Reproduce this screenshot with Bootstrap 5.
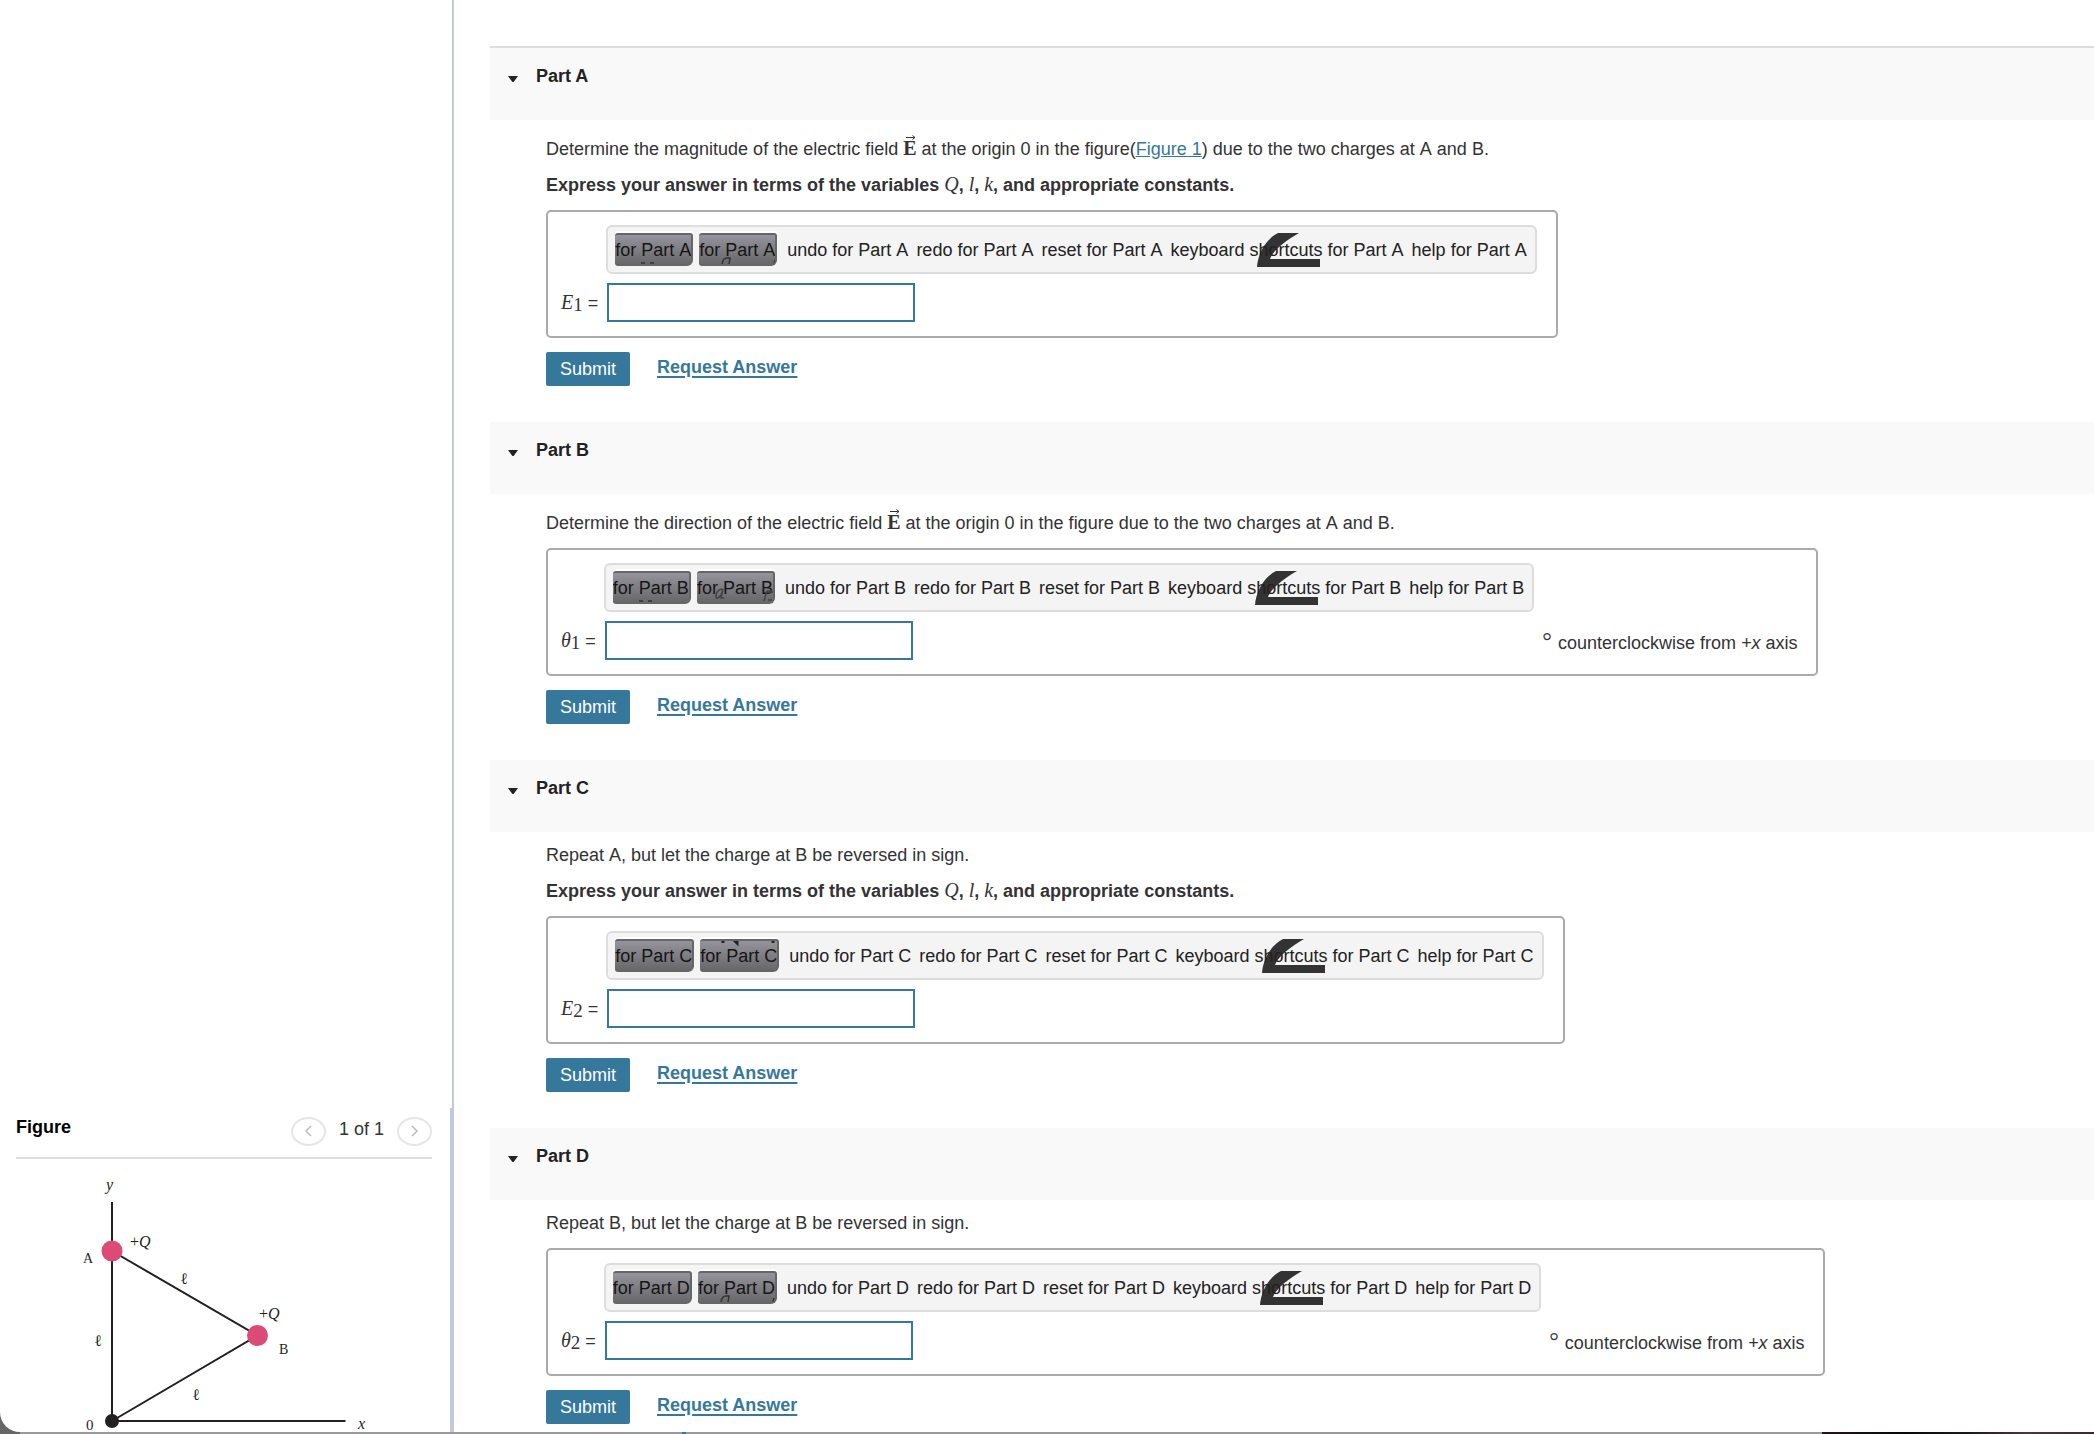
<!DOCTYPE html>
<html lang="en">
<head>
<meta charset="utf-8">
<meta name="viewport" content="width=device-width, initial-scale=1">
<title>Electric field of two charges</title>
<link href="https://cdn.jsdelivr.net/npm/bootstrap@5.3.0/dist/css/bootstrap.min.css" rel="stylesheet">
<style>
  body { font-family: "Liberation Sans", Arial, sans-serif; font-size: 18px; line-height: 24px; color: #333; background: #fff; }
  .teal, .teal:hover { color: #35789b; }
  .app-shell { background: linear-gradient(90deg, #666 0, #666 20px, #999 20px); }
  .app-main { background: #fff; border-bottom-left-radius: 20px; }
  .side-pane { width: 454px; }
  .side-top { border-right: 2px solid #bfcbdd; }
  .figure-pane { height: 324px; border-right: 4px solid #bfcbdd; }
  .figure-head { margin: 0 18px 0 16px; height: 51px; border-bottom: 2px solid #ddd; color: #000; }
  .figure-title { padding-top: 7px; }
  .pager { gap: 13px; padding-top: 9px; color: #333; }
  .pager-btn { width: 35px; height: 29px; border: 2px solid #e6e6e6; border-radius: 50%; background: #fff; }
  .pager-btn svg { vertical-align: middle; margin-bottom: 3px; }
  .content-pane { padding: 46px 0 0 36px; }
  .first-part { border-top: 2px solid #ddd; }
  .part-head { height: 72px; background: #f9f9f9; padding: 16px 0 0 17px; }
  .part-toggle { font-size: 18px; font-weight: bold; line-height: 24px; color: #222; }
  .part-toggle svg { margin: 11px 17px 0 0; }
  .part-body { padding: 11px 0 36px 56px; }
  .part-body p { margin-bottom: 12px; font-kerning: none; }
  .part-body p.has-vector { margin-top: 6px; }
  .math { font-family: "Liberation Serif", serif; font-style: italic; font-weight: normal; font-size: 20px; line-height: 1; }
  .math span { font-style: normal; font-size: 19px; position: relative; top: 2px; }
  .vector { position: relative; font-family: "Liberation Serif", serif; font-weight: bold; font-size: 20px; line-height: 1; }
  .vector svg { position: absolute; left: 3px; top: -2px; }
  .answer-box { width: fit-content; height: 128px; margin-top: 13px; border: 2px solid #aaa; border-radius: 5px; padding: 13px 19px 0 13px; }
  .answer-label { padding-top: 66px; }
  .tool-strip { height: 49px; border: 2px solid #ddd; border-radius: 6px; background: #f4f4f4; padding: 0 4px 0 7px; }
  .tool-btn { border: 0; background: none; padding: 0 4px; color: #222; white-space: nowrap; position: relative; font-kerning: none; }
  .tool-btn.palette-btn { height: 33px; margin: 0 6px 0 0; padding: 0; border: 2px solid #666; border-left: 0; border-radius: 3px 3px 6px 3px; background: linear-gradient(#95939c, #68686a); box-shadow: 0 -2px 0 #fff; color: #151515; line-height: 26px; overflow: hidden; }
  .palette-btn svg { position: absolute; left: 0; top: -2px; }
  .keys-icon { position: absolute; left: 91px; top: -5px; z-index: 0; }
  .tool-btn b { position: relative; z-index: 1; font-weight: normal; }
  .answer-input { width: 308px; height: 39px; border: 2px solid #35789b; border-radius: 0; margin: 9px 0 0 1px; padding: 4px 8px; }
  .answer-unit { padding: 66px 0 0 8px; }
  .degree-sign { font-family: "Liberation Serif", serif; font-size: 24px; line-height: 1; margin-right: 6px; }
  .actions { margin-top: 14px; gap: 27px; }
  .submit-btn { width: 84px; height: 34px; padding: 0; border: 0; border-radius: 2px; background: #35789b; color: #fff; font-size: 18px; line-height: 34px; }
  .request-link { font-weight: bold; line-height: 30px; text-decoration-thickness: 2px; text-underline-offset: 3px; }
  .desktop-edge { height: 2px; }
  .edge-tab { width: 4px; margin-left: 682px; background: #35789b; }
  .edge-photo { width: 13%; background: linear-gradient(90deg, #2a1414, #08060b 30%, #201820 55%, #54323c 75%, #3a2a26); }
</style>
<script src="https://cdn.jsdelivr.net/npm/bootstrap@5.3.0/dist/js/bootstrap.bundle.min.js"></script>
</head>
<body>
<svg width="0" height="0" class="position-absolute" aria-hidden="true">
  <symbol id="caret" viewBox="0 0 12 8"><path d="M1 1h10L7 6.500Q6 7.500 5 6.500Z" fill="#222"/></symbol>
  <symbol id="keys" viewBox="0 0 63 34"><path d="M0 34C1 20 9 6 21 0H42C30 7 16 17 13 26H63V34Z" fill="#333"/></symbol>
  <symbol id="arrow" viewBox="0 0 10 5"><path d="M0 2.500H9M6.500 .5L9 2.500L6.500 4.500" fill="none" stroke="#333" stroke-width="1"/></symbol>
  <symbol id="dots" viewBox="0 0 78 33"><path d="M26 30h4M35 30h4" stroke="#333" stroke-width="1.500"/></symbol>
  <symbol id="low" viewBox="0 0 78 33"><path d="M23 31Q24 25 28 25H31L30 31M75 31L76 27" fill="none" stroke="#333" stroke-width="1.500"/></symbol>
  <symbol id="mid" viewBox="0 0 78 33"><path d="M25 18Q19 19 19 26Q20 29 24 24L26 18L24 27H27M75 20H70L67 30M69 21H77M71 29H75" fill="none" stroke="#444" stroke-width="1.500"/></symbol>
  <symbol id="high" viewBox="0 0 78 33"><path d="M23 0V4M33 0L37 4V0M73 0V4" fill="none" stroke="#222" stroke-width="3"/></symbol>
</svg>

<div class="app-shell vh-100 d-flex flex-column overflow-hidden">
  <div class="app-main d-flex flex-grow-1 overflow-hidden">

    <aside class="side-pane d-flex flex-column flex-shrink-0">
      <div class="side-top flex-grow-1"></div>
      <section class="figure-pane">
        <div class="figure-head d-flex justify-content-between">
          <strong class="figure-title">Figure</strong>
          <div class="pager d-flex">
            <button class="pager-btn p-0 lh-1" type="button" aria-label="Previous figure"><svg width="8" height="12" viewBox="0 0 8 12"><path d="M7 1L2 6l5 5" fill="none" stroke="#bbb" stroke-width="1.500"/></svg></button>
            <span>1 of 1</span>
            <button class="pager-btn p-0 lh-1" type="button" aria-label="Next figure"><svg width="8" height="12" viewBox="0 0 8 12"><path d="M1 1l5 5-5 5" fill="none" stroke="#bbb" stroke-width="1.500"/></svg></button>
          </div>
        </div>
        <svg class="d-block" width="450" height="273" viewBox="0 1159 450 273" role="img" aria-label="Charges A and B and the origin form a triangle with sides l" font-family="Liberation Serif, serif" font-size="16" fill="#231f20">
          <path d="M112 1202V1421H345.500M112 1251L257.500 1335.500L112 1421" fill="none" stroke="#231f20" stroke-width="2"/>
          <circle cx="112" cy="1251" r="10.500" fill="#dc4b77"/>
          <circle cx="257.500" cy="1335.500" r="10.500" fill="#dc4b77"/>
          <circle cx="112" cy="1421" r="7"/>
          <text x="106" y="1190" font-style="italic">y</text>
          <text x="83" y="1263" font-size="14">A</text>
          <text x="130" y="1247">+<tspan font-style="italic">Q</tspan></text>
          <text x="259" y="1319">+<tspan font-style="italic">Q</tspan></text>
          <text x="279" y="1354" font-size="14">B</text>
          <text x="180" y="1284">ℓ</text>
          <text x="94" y="1346">ℓ</text>
          <text x="192" y="1400">ℓ</text>
          <text x="86" y="1430" font-size="15">0</text>
          <text x="358" y="1429" font-style="italic">x</text>
        </svg>
      </section>
    </aside>

    <main class="content-pane flex-grow-1">

      <section class="first-part">
        <div class="part-head"><button class="part-toggle btn p-0 border-0 d-flex" type="button"><svg width="12" height="8"><use href="#caret"/></svg>Part A</button></div>
        <div class="part-body">
          <p class="has-vector">Determine the magnitude of the electric field <span class="vector">E<svg width="10" height="5"><use href="#arrow"/></svg></span> at the origin 0 in the figure(<a class="teal" href="#">Figure 1</a>) due to the two charges at A and B.</p>
          <p class="fw-bold">Express your answer in terms of the variables <i class="math">Q</i>, <i class="math">l</i>, <i class="math">k</i>, and appropriate constants.</p>
          <div class="answer-box d-flex">
            <label class="answer-label pe-2" for="ans-a"><i class="math">E<span>1</span></i> =</label>
            <div>
              <div class="tool-strip d-flex align-items-center">
                <button class="tool-btn palette-btn" type="button">for Part A<svg width="78" height="33"><use href="#dots"/></svg></button>
                <button class="tool-btn palette-btn" type="button">for Part A<svg width="78" height="33"><use href="#low"/></svg></button>
                <button class="tool-btn" type="button">undo for Part A</button>
                <button class="tool-btn" type="button">redo for Part A</button>
                <button class="tool-btn" type="button">reset for Part A</button>
                <button class="tool-btn" type="button"><svg class="keys-icon" width="63" height="34"><use href="#keys"/></svg><b>keyboard shortcuts for Part A</b></button>
                <button class="tool-btn" type="button">help for Part A</button>
              </div>
              <input class="answer-input d-block" id="ans-a" type="text">
            </div>
          </div>
          <div class="actions d-flex"><button class="submit-btn" type="submit">Submit</button><a class="request-link teal" href="#">Request Answer</a></div>
        </div>
      </section>

      <section>
        <div class="part-head"><button class="part-toggle btn p-0 border-0 d-flex" type="button"><svg width="12" height="8"><use href="#caret"/></svg>Part B</button></div>
        <div class="part-body">
          <p class="has-vector">Determine the direction of the electric field <span class="vector">E<svg width="10" height="5"><use href="#arrow"/></svg></span> at the origin 0 in the figure due to the two charges at A and B.</p>
          <div class="answer-box d-flex">
            <label class="answer-label pe-2" for="ans-b"><i class="math">θ<span>1</span></i> =</label>
            <div>
              <div class="tool-strip d-flex align-items-center">
                <button class="tool-btn palette-btn" type="button">for Part B<svg width="78" height="33"><use href="#dots"/></svg></button>
                <button class="tool-btn palette-btn" type="button">for Part B<svg width="78" height="33"><use href="#mid"/></svg></button>
                <button class="tool-btn" type="button">undo for Part B</button>
                <button class="tool-btn" type="button">redo for Part B</button>
                <button class="tool-btn" type="button">reset for Part B</button>
                <button class="tool-btn" type="button"><svg class="keys-icon" width="63" height="34"><use href="#keys"/></svg><b>keyboard shortcuts for Part B</b></button>
                <button class="tool-btn" type="button">help for Part B</button>
              </div>
              <input class="answer-input d-block" id="ans-b" type="text">
            </div>
            <div class="answer-unit"><span class="degree-sign">°</span>counterclockwise from <i>+x</i> axis</div>
          </div>
          <div class="actions d-flex"><button class="submit-btn" type="submit">Submit</button><a class="request-link teal" href="#">Request Answer</a></div>
        </div>
      </section>

      <section>
        <div class="part-head"><button class="part-toggle btn p-0 border-0 d-flex" type="button"><svg width="12" height="8"><use href="#caret"/></svg>Part C</button></div>
        <div class="part-body">
          <p>Repeat A, but let the charge at B be reversed in sign.</p>
          <p class="fw-bold">Express your answer in terms of the variables <i class="math">Q</i>, <i class="math">l</i>, <i class="math">k</i>, and appropriate constants.</p>
          <div class="answer-box d-flex">
            <label class="answer-label pe-2" for="ans-c"><i class="math">E<span>2</span></i> =</label>
            <div>
              <div class="tool-strip d-flex align-items-center">
                <button class="tool-btn palette-btn" type="button">for Part C</button>
                <button class="tool-btn palette-btn" type="button">for Part C<svg width="78" height="33"><use href="#high"/></svg></button>
                <button class="tool-btn" type="button">undo for Part C</button>
                <button class="tool-btn" type="button">redo for Part C</button>
                <button class="tool-btn" type="button">reset for Part C</button>
                <button class="tool-btn" type="button"><svg class="keys-icon" width="63" height="34"><use href="#keys"/></svg><b>keyboard shortcuts for Part C</b></button>
                <button class="tool-btn" type="button">help for Part C</button>
              </div>
              <input class="answer-input d-block" id="ans-c" type="text">
            </div>
          </div>
          <div class="actions d-flex"><button class="submit-btn" type="submit">Submit</button><a class="request-link teal" href="#">Request Answer</a></div>
        </div>
      </section>

      <section>
        <div class="part-head"><button class="part-toggle btn p-0 border-0 d-flex" type="button"><svg width="12" height="8"><use href="#caret"/></svg>Part D</button></div>
        <div class="part-body">
          <p>Repeat B, but let the charge at B be reversed in sign.</p>
          <div class="answer-box d-flex">
            <label class="answer-label pe-2" for="ans-d"><i class="math">θ<span>2</span></i> =</label>
            <div>
              <div class="tool-strip d-flex align-items-center">
                <button class="tool-btn palette-btn" type="button">for Part D</button>
                <button class="tool-btn palette-btn" type="button">for Part D<svg width="78" height="33"><use href="#low"/></svg></button>
                <button class="tool-btn" type="button">undo for Part D</button>
                <button class="tool-btn" type="button">redo for Part D</button>
                <button class="tool-btn" type="button">reset for Part D</button>
                <button class="tool-btn" type="button"><svg class="keys-icon" width="63" height="34"><use href="#keys"/></svg><b>keyboard shortcuts for Part D</b></button>
                <button class="tool-btn" type="button">help for Part D</button>
              </div>
              <input class="answer-input d-block" id="ans-d" type="text">
            </div>
            <div class="answer-unit"><span class="degree-sign">°</span>counterclockwise from <i>+x</i> axis</div>
          </div>
          <div class="actions d-flex"><button class="submit-btn" type="submit">Submit</button><a class="request-link teal" href="#">Request Answer</a></div>
        </div>
      </section>
    </main>
  </div>
  <div class="desktop-edge d-flex justify-content-between flex-shrink-0"><div class="edge-tab"></div><div class="edge-photo"></div></div>
</div>
</body>
</html>
